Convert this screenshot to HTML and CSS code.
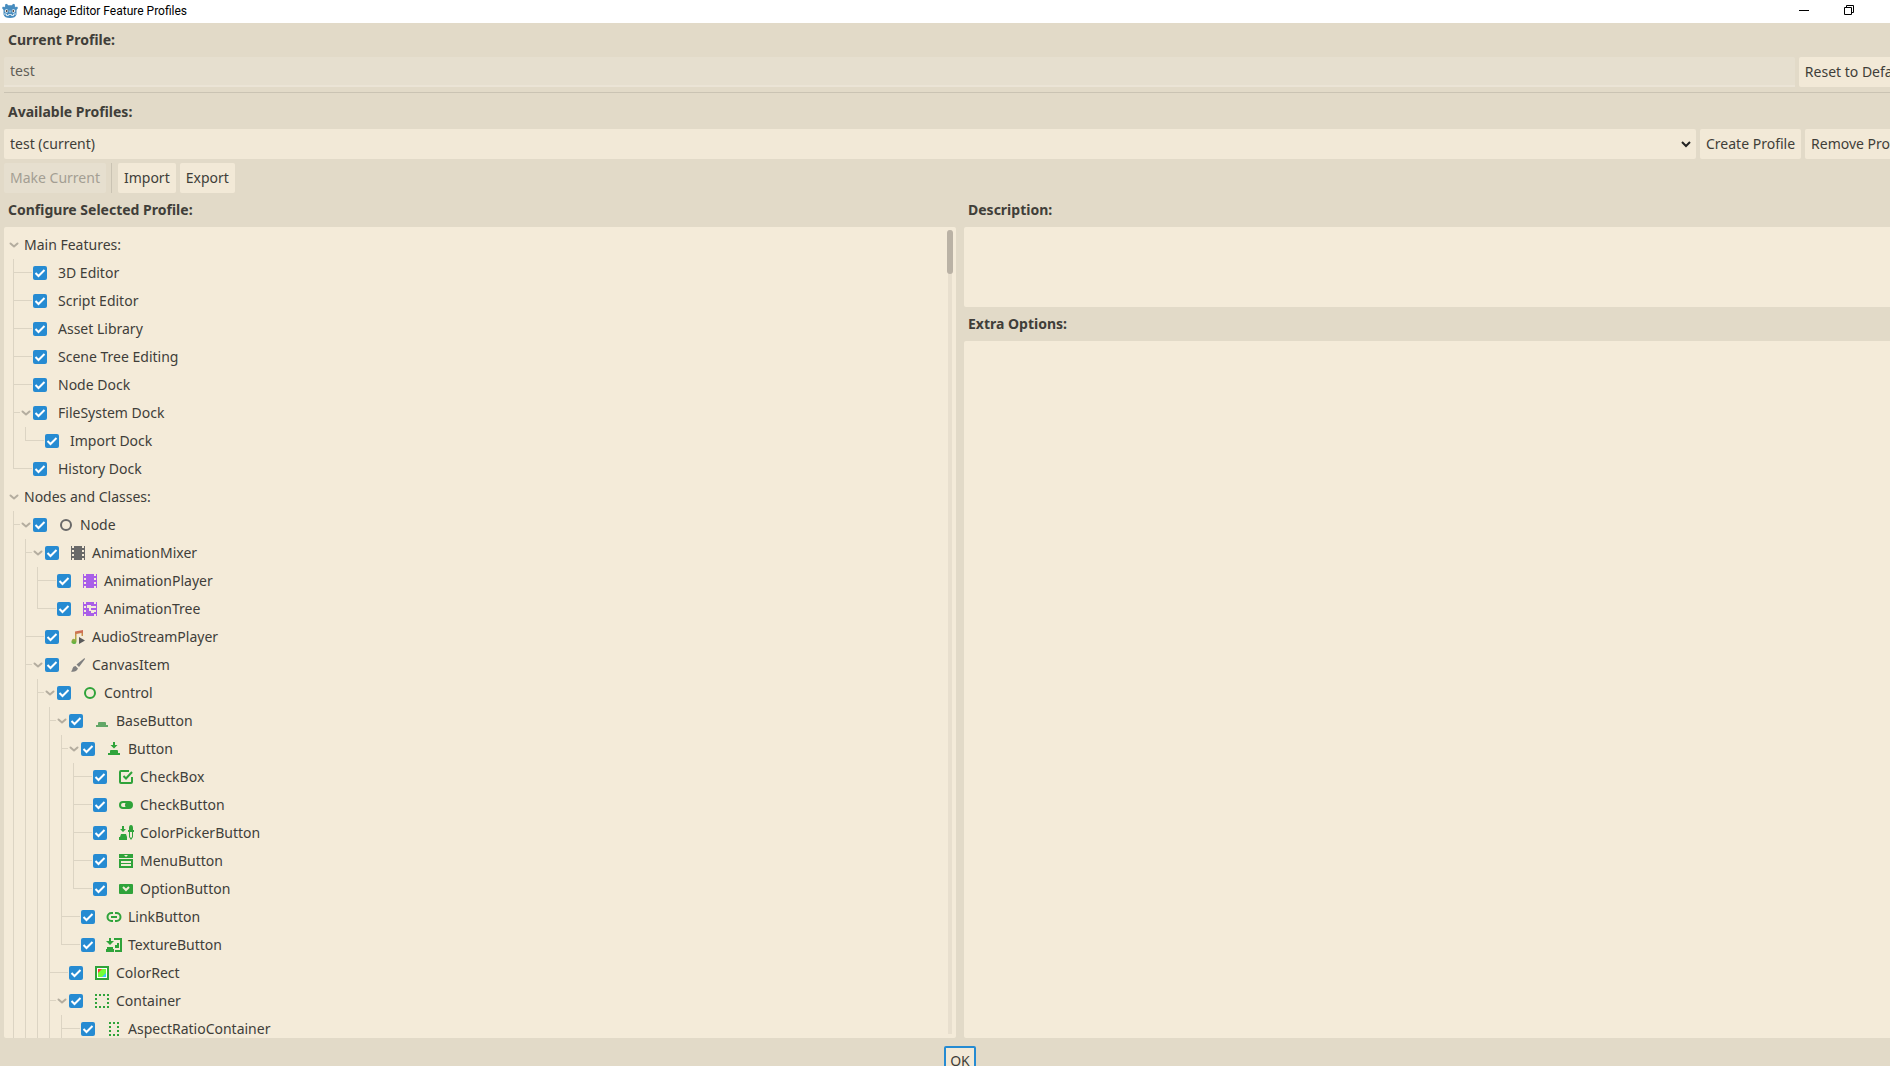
FILE: index.html
```
<!DOCTYPE html>
<html lang="en">
<head>
    <meta charset="UTF-8">
    <meta name="viewport" content="width=device-width, initial-scale=1.0">
    <title>Manage Editor Feature Profiles</title>
    <link rel="stylesheet" href="styles.css">
</head>
<body>
    <!-- Shared icons -->
    <svg class="sprites" aria-hidden="true">
        <symbol id="arrow" viewBox="0 0 12 12"><path d="M2.5 4.5 6 7.5l3.5-3" fill="none" stroke="#b4ad9f" stroke-width="2" stroke-linecap="round" stroke-linejoin="round"/></symbol>
        <symbol id="film" viewBox="0 0 16 16"><path fill-rule="evenodd" d="M1 1v14h1v-2h2v2h8v-2h2v2h1V1h-1v2h-2V1H4v2H2V1zm1 4h2v2H2zm10 0h2v2h-2zM2 9h2v2H2zm10 0h2v2h-2z"/></symbol>
        <symbol id="press" viewBox="0 0 16 16"><path d="M7 1v3H4.500L8 7.500 11.500 4H9V1zM5 9a1 1 0 0 0-1 1v2H2v2h12v-2h-2v-2a1 1 0 0 0-1-1z"/></symbol>
    </svg>

    <div class="window">
        <header class="titlebar">
            <svg class="logo" viewBox="0 0 16 16" aria-hidden="true">
                <path d="M3 1.500 5 .8l1 1.500h4L11 .8l2 .7-.2 1.700 1 1L15 3.500l1 1.500-1.500 2v4.500q-1 3.500-6.500 3.500t-6.500-3.500V7L0 5l1-1.500 1.200.7 1-1z" fill="#478cbf"/>
                <circle cx="4.500" cy="8" r="1.800" fill="#fff"/><circle cx="11.500" cy="8" r="1.800" fill="#fff"/>
                <circle cx="4.700" cy="8" r="1" fill="#414042"/><circle cx="11.300" cy="8" r="1" fill="#414042"/>
                <path d="M8 7.500v2M2 11h2.500v1.500h2V11.500h3v1H11.500V11H14" fill="none" stroke="#fff" stroke-width=".8"/>
            </svg>
            <h1>Manage Editor Feature Profiles</h1>
            <button class="caption" aria-label="Minimize"><svg width="10" height="10"><path d="M0 5.500h10" stroke="#000"/></svg></button>
            <button class="caption" aria-label="Restore"><svg width="10" height="10" fill="none" stroke="#000"><path d="M.5 2.500h7v7h-7zM2.500 2.500v-2h7v7h-2"/></svg></button>
            <button class="caption" aria-label="Close"></button>
        </header>

        <main class="dialog">
            <label class="heading" for="current">Current Profile:</label>
            <div class="row">
                <input class="line-edit" id="current" type="text" value="test" readonly>
                <button class="btn">Reset to Default</button>
            </div>
            <hr>

            <label class="heading" for="available">Available Profiles:</label>
            <div class="row">
                <select class="profiles" id="available"><option>test (current)</option></select>
                <button class="btn">Create Profile</button>
                <button class="btn">Remove Profile</button>
            </div>
            <div class="row actions">
                <button class="btn" disabled>Make Current</button>
                <span class="divider"></span>
                <button class="btn">Import</button>
                <button class="btn">Export</button>
            </div>

            <div class="columns">
                <section class="column">
                    <h2 class="heading">Configure Selected Profile:</h2>
                    <div class="panel tree">
                        <ul class="root">
                            <li>
                                <div class="item"><button class="fold" aria-label="Fold"><svg><use href="#arrow"/></svg></button><span>Main Features:</span></div>
                                <ul>
                                    <li><div class="item"><label><input type="checkbox" checked>3D Editor</label></div></li>
                                    <li><div class="item"><label><input type="checkbox" checked>Script Editor</label></div></li>
                                    <li><div class="item"><label><input type="checkbox" checked>Asset Library</label></div></li>
                                    <li><div class="item"><label><input type="checkbox" checked>Scene Tree Editing</label></div></li>
                                    <li><div class="item"><label><input type="checkbox" checked>Node Dock</label></div></li>
                                    <li>
                                        <div class="item parent"><button class="fold" aria-label="Fold"><svg><use href="#arrow"/></svg></button><label><input type="checkbox" checked>FileSystem Dock</label></div>
                                        <ul>
                                            <li><div class="item"><label><input type="checkbox" checked>Import Dock</label></div></li>
                                        </ul>
                                    </li>
                                    <li><div class="item"><label><input type="checkbox" checked>History Dock</label></div></li>
                                </ul>
                            </li>
                            <li>
                                <div class="item"><button class="fold" aria-label="Fold"><svg><use href="#arrow"/></svg></button><span>Nodes and Classes:</span></div>
                                <ul>
                                    <li class="more">
                                        <div class="item parent"><button class="fold" aria-label="Fold"><svg><use href="#arrow"/></svg></button><label><input type="checkbox" checked><svg class="icon grey" viewBox="0 0 16 16"><circle cx="8" cy="8" r="5" fill="none" stroke="currentColor" stroke-width="2"/></svg>Node</label></div>
                                        <ul>
                                            <li>
                                                <div class="item parent"><button class="fold" aria-label="Fold"><svg><use href="#arrow"/></svg></button><label><input type="checkbox" checked><svg class="icon grey"><use href="#film"/></svg>AnimationMixer</label></div>
                                                <ul>
                                                    <li><div class="item"><label><input type="checkbox" checked><svg class="icon purple"><use href="#film"/></svg>AnimationPlayer</label></div></li>
                                                    <li><div class="item"><label><input type="checkbox" checked><svg class="icon purple" viewBox="0 0 16 16"><use href="#film"/><path d="M5 4h4v1h3v2H9v2h3v3H9v-2H7V7H5z" fill="#f4ebd9"/></svg>AnimationTree</label></div></li>
                                                </ul>
                                            </li>
                                            <li><div class="item"><label><input type="checkbox" checked><svg class="icon" viewBox="0 0 16 16"><defs><linearGradient id="note" x2="0" y2="1"><stop offset=".1" stop-color="#cf6a55"/><stop offset=".5" stop-color="#c3a544"/><stop offset="1" stop-color="#52b53f"/></linearGradient></defs><path d="M13 1 5 2.500v7.700A2.500 2.500 0 1 0 6.500 12.500V5l5-1v3H13z" fill="url(#note)"/><path d="m9 8 6 3.500L9 15z" fill="#5a5a5a"/></svg>AudioStreamPlayer</label></div></li>
                                            <li class="more">
                                                <div class="item parent"><button class="fold" aria-label="Fold"><svg><use href="#arrow"/></svg></button><label><input type="checkbox" checked><svg class="icon silver" viewBox="0 0 16 16"><path d="M14.500 1 6.500 7.500 9 10l6-8zM5.500 9a3 3 0 0 0-3 2.500q0 1.500-1.500 3 5 1 7-3z"/></svg>CanvasItem</label></div>
                                                <ul>
                                                    <li class="more">
                                                        <div class="item parent"><button class="fold" aria-label="Fold"><svg><use href="#arrow"/></svg></button><label><input type="checkbox" checked><svg class="icon green" viewBox="0 0 16 16"><circle cx="8" cy="8" r="5" fill="none" stroke="currentColor" stroke-width="2"/></svg>Control</label></div>
                                                        <ul>
                                                            <li>
                                                                <div class="item parent"><button class="fold" aria-label="Fold"><svg><use href="#arrow"/></svg></button><label><input type="checkbox" checked><svg class="icon sage" viewBox="0 0 16 16"><path d="M5 9a1 1 0 0 0-1 1v2H2v2h12v-2h-2v-2a1 1 0 0 0-1-1z"/></svg>BaseButton</label></div>
                                                                <ul>
                                                                    <li>
                                                                        <div class="item parent"><button class="fold" aria-label="Fold"><svg><use href="#arrow"/></svg></button><label><input type="checkbox" checked><svg class="icon green"><use href="#press"/></svg>Button</label></div>
                                                                        <ul>
                                                                            <li><div class="item"><label><input type="checkbox" checked><svg class="icon green" viewBox="0 0 16 16"><path d="M11 2H3a1 1 0 0 0-1 1v10a1 1 0 0 0 1 1h10a1 1 0 0 0 1-1V8" fill="none" stroke="currentColor" stroke-width="2"/><path d="m5.500 7 2.500 2.500L14 3" fill="none" stroke="currentColor" stroke-width="2"/></svg>CheckBox</label></div></li>
                                                                            <li><div class="item"><label><input type="checkbox" checked><svg class="icon green" viewBox="0 0 16 16"><path fill-rule="evenodd" d="M5 4a4 4 0 0 0 0 8h6a4 4 0 0 0 0-8zm0 2h2.500a4 4 0 0 0 0 4H5a2 2 0 0 1 0-4z"/></svg>CheckButton</label></div></li>
                                                                            <li><div class="item"><label><input type="checkbox" checked><svg class="icon green" viewBox="0 0 16 16"><path d="M4 1v3H2l3 3 3-3H6V1zM3 9 2 12H1v3h8v-3L8 9zM13 0q-2 0-2 3v2h-1v2h1v5l2 3 2-3V7h1V5h-1V3q0-3-2-3z"/><path d="M12 7h2v5l-1 1-1-1z" fill="#f4ebd9"/></svg>ColorPickerButton</label></div></li>
                                                                            <li><div class="item"><label><input type="checkbox" checked><svg class="icon green" viewBox="0 0 16 16"><path fill-rule="evenodd" d="M1 1v4h14V1zm5 1h4L8 4zM1 6v9h14V6zm2 2h10v2H3zm0 3h10v2H3z"/></svg>MenuButton</label></div></li>
                                                                            <li><div class="item"><label><input type="checkbox" checked><svg class="icon green" viewBox="0 0 16 16"><rect x="1" y="3" width="14" height="10" rx="1"/><path d="m5 6 3 3 3-3" fill="none" stroke="#f4ebd9" stroke-width="2"/></svg>OptionButton</label></div></li>
                                                                        </ul>
                                                                    </li>
                                                                    <li><div class="item"><label><input type="checkbox" checked><svg class="icon green" viewBox="0 0 16 16"><path d="M7 4H5.500a4 4 0 0 0 0 8H7M9 4h1.500a4 4 0 0 1 0 8H9M5 8h6" fill="none" stroke="currentColor" stroke-width="2"/></svg>LinkButton</label></div></li>
                                                                    <li><div class="item"><label><input type="checkbox" checked><svg class="icon green" viewBox="0 0 16 16"><path d="M3 1v3H0l4 4 4-4H5V1zM1 10v2H0v3h8v-3H7v-2zM8 1v2h6v10H9v2h7V1zM9 8h2V6h2v5H9z"/></svg>TextureButton</label></div></li>
                                                                </ul>
                                                            </li>
                                                            <li><div class="item"><label><input type="checkbox" checked><svg class="icon green" viewBox="0 0 16 16"><path d="M1 1h14v14H1z"/><path d="M3 3h10v10H3z" fill="#fff"/><path d="M4 4h8v8H4z" fill="#70ff38"/><path d="M4 4h4L4 8z" fill="#ff3a3a"/><path d="M12 8v4H8z" fill="#38c6ff"/></svg>ColorRect</label></div></li>
                                                            <li class="more">
                                                                <div class="item parent"><button class="fold" aria-label="Fold"><svg><use href="#arrow"/></svg></button><label><input type="checkbox" checked><svg class="icon green" viewBox="0 0 16 16"><path d="M1 1h2v2H1zM5 1h2v2H5zM9 1h2v2H9zM13 1h2v2h-2zM1 5h2v2H1zM13 5h2v2h-2zM1 9h2v2H1zM13 9h2v2h-2zM1 13h2v2H1zM5 13h2v2H5zM9 13h2v2H9zM13 13h2v2h-2z"/></svg>Container</label></div>
                                                                <ul>
                                                                    <li class="more"><div class="item"><label><input type="checkbox" checked><svg class="icon green" viewBox="0 0 16 16"><path d="M3 1h2v2H3zM7 1h2v2H7zM11 1h2v2h-2zM3 5h2v2H3zM11 5h2v2h-2zM3 9h2v2H3zM11 9h2v2h-2zM3 13h2v2H3zM7 13h2v2H7zM11 13h2v2h-2z"/></svg>AspectRatioContainer</label></div></li>
                                                                </ul>
                                                            </li>
                                                        </ul>
                                                    </li>
                                                </ul>
                                            </li>
                                        </ul>
                                    </li>
                                </ul>
                            </li>
                        </ul>
                        <div class="scrollbar"><div class="thumb"></div></div>
                    </div>
                </section>

                <section class="column">
                    <h2 class="heading">Description:</h2>
                    <div class="panel description"></div>
                    <h2 class="heading">Extra Options:</h2>
                    <div class="panel options"></div>
                </section>
            </div>

            <footer>
                <button class="btn ok">OK</button>
            </footer>
        </main>
    </div>
</body>
</html>
```
FILE: styles.css
```
* {
    box-sizing: border-box;
}
html,
body {
    height: 100%;
    margin: 0;
    overflow: hidden;
}
body {
    font-family: "Noto Sans", sans-serif;
    font-size: 14px;
    line-height: 20px;
    color: #403e39;
    background-color: #e2dac8;
}
button,
input,
select {
    font: inherit;
    color: inherit;
    margin: 0;
}
ul {
    list-style: none;
    margin: 0;
    padding: 0;
}
.sprites {
    position: absolute;
    width: 0;
    height: 0;
}

/* The window is a little larger than the visible screen */
.window {
    width: calc(100% + 30px);
    height: calc(100% + 14px);
    display: flex;
    flex-direction: column;
}
.titlebar {
    display: flex;
    align-items: flex-start;
    height: 23px;
    padding: 0 4px 0 2px;
    background-color: #fff;
    color: #000;
}
.logo {
    width: 16px;
    height: 16px;
    margin: 3px 5px 0 0;
}
.titlebar h1 {
    flex: 1;
    margin: 0;
    font-family: Roboto, sans-serif;
    font-size: 12px;
    font-weight: normal;
    line-height: 23px;
}
.caption {
    display: flex;
    justify-content: center;
    align-items: center;
    width: 45px;
    height: 20px;
    padding: 0;
    border: none;
    background: none;
}

.dialog {
    flex: 1;
    min-height: 0;
    display: flex;
    flex-direction: column;
    padding: 0 4px 4px;
}
.heading {
    display: block;
    height: 34px;
    margin: 0;
    padding: 0 4px;
    font-size: 14px;
    font-weight: bold;
    line-height: 34px;
}
.row {
    display: flex;
    gap: 4px;
}
.actions {
    margin-top: 4px;
}
.btn,
.line-edit,
.profiles {
    height: 30px;
    padding: 0 6px;
    border: none;
    border-radius: 2px;
    background-color: #f2e9d7;
}
.btn {
    white-space: nowrap;
}
.btn:disabled {
    background-color: #e6dfcf;
    color: #a39e93;
}
.line-edit {
    flex: 1;
    padding-bottom: 1px;
    border-bottom: 2px solid #ebe4d6;
    border-radius: 2px 2px 0 0;
    background-color: #e6dfcf;
    color: #615e57;
    outline: none;
}
.profiles {
    flex: 1;
    appearance: none;
    background-image: url("data:image/svg+xml,%3Csvg xmlns='http://www.w3.org/2000/svg' width='12' height='12'%3E%3Cpath d='M2 4l4 4 4-4' fill='none' stroke='%23222' stroke-width='2'/%3E%3C/svg%3E");
    background-repeat: no-repeat;
    background-position: right 4px center;
}
hr {
    width: 100%;
    height: 1px;
    margin: 5px 0 2px;
    border: none;
    background-color: #cac3b3;
}
.divider {
    width: 1px;
    margin: 0 2px 0 1px;
    background-color: #cac3b3;
}

.columns {
    flex: 1;
    min-height: 0;
    display: flex;
    gap: 8px;
}
.column {
    flex: 1;
    min-width: 0;
    display: flex;
    flex-direction: column;
}
.panel {
    border-radius: 2px;
    background-color: #f4ebd9;
}
.description {
    height: 80px;
}
.options {
    flex: 1;
}
.tree {
    flex: 1;
    min-height: 0;
    display: flex;
    overflow: hidden;
    padding: 0 3px 0 4px;
}
.root {
    flex: 1;
    padding-top: 4px;
}
.root > li > ul {
    margin-left: 5px;
}
li li {
    position: relative;
}
li li > ul {
    margin-left: 12px;
}

/* Relationship lines */
li li::before {
    content: "";
    position: absolute;
    top: 0;
    bottom: 0;
    left: 0;
    width: 1px;
    background-color: #dcd4c3;
}
li li:last-child::before {
    bottom: auto;
    height: 14px;
}
li li.more::before {
    bottom: 0;
    height: auto;
}
.item {
    display: flex;
    align-items: center;
    height: 28px;
}
li li > .item::before {
    content: "";
    width: 19px;
    height: 1px;
    margin: 0 1px 1px 0;
    background-color: #dcd4c3;
}
li li > .parent::before {
    width: 7px;
    margin-right: 0;
}
.fold {
    width: 12px;
    height: 12px;
    padding: 0;
    border: none;
    background: none;
}
.fold svg {
    display: block;
    width: 12px;
    height: 12px;
}
.item > span {
    margin-left: 4px;
}
.parent label {
    margin-left: 1px;
}
.item label {
    display: flex;
    align-items: center;
}
input[type="checkbox"] {
    appearance: none;
    width: 14px;
    height: 14px;
    margin-right: 11px;
    border-radius: 2px;
    background: #268bd2 url("data:image/svg+xml,%3Csvg xmlns='http://www.w3.org/2000/svg' width='14' height='14'%3E%3Cpath d='M2.500 7l3 3 6-6' fill='none' stroke='%23fff' stroke-width='2'/%3E%3C/svg%3E");
}
.icon {
    width: 16px;
    height: 16px;
    margin-right: 6px;
    fill: currentColor;
}
.grey {
    color: #696969;
}
.silver {
    color: #808080;
}
.purple {
    color: #a95ee8;
}
.green {
    color: #2fa33a;
}
.sage {
    color: #62a767;
}

.scrollbar {
    width: 6px;
    margin: 3px 0 4px;
    background: linear-gradient(#e8dfce, #e8dfce) center / 4px 100% no-repeat;
}
.thumb {
    height: 44px;
    border-radius: 3px;
    background-color: #bab2a5;
}

footer {
    display: flex;
    justify-content: center;
    margin-top: 8px;
}
.ok {
    border: 2px solid #268bd2;
    padding: 0 4px;
}
```
